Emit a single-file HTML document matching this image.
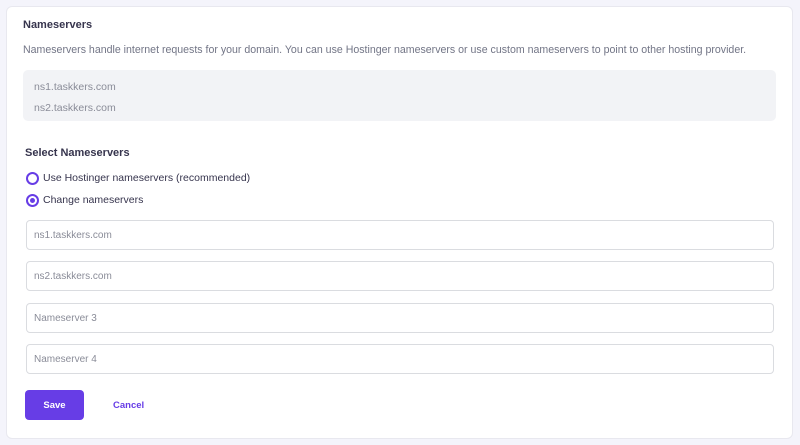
<!DOCTYPE html>
<html><head><style>
*{box-sizing:border-box;margin:0;padding:0}
body{width:800px;height:445px;background:#f4f4fb;font-family:"Liberation Sans",sans-serif;position:relative;overflow:hidden}
.card{position:absolute;left:6px;top:6px;width:787px;height:433px;background:#fff;border-radius:6px;border:1px solid #e8e8ef}
.a{position:absolute;white-space:nowrap}
.t{font-size:11px;font-weight:bold;color:#36344d}
.d{font-size:10.6px;color:#727586}
.box{position:absolute;left:23px;top:70px;width:753px;height:51px;background:#f2f3f6;border-radius:5px}
.g{font-size:10.5px;color:#8a8c98}
.r{position:absolute;left:26px;width:13px;height:13px;border:2px solid #673de6;border-radius:50%}
.r i{position:absolute;left:2px;top:2px;width:5px;height:5px;border-radius:50%;background:#673de6}
.rl{font-size:10.5px;color:#36344d}
.in{position:absolute;left:26px;width:748px;height:30px;border:1px solid #dadce0;border-radius:4px;font-size:10px;color:#8a8c98;padding:9px 7px}
.save{position:absolute;left:25px;top:390px;width:59px;height:30px;background:#673de6;border-radius:4px;color:#fff;font-size:9.5px;font-weight:bold;text-align:center;line-height:31px}
</style></head><body>
<div class="card"></div>
<div class="a t" style="left:23px;top:19px">Nameservers</div>
<div class="a d" style="left:23px;top:44px">Nameservers handle internet requests for your domain. You can use Hostinger nameservers or use custom nameservers to point to other hosting provider.</div>
<div class="box"></div>
<div class="a g" style="left:34px;top:81px">ns1.taskkers.com</div>
<div class="a g" style="left:34px;top:102px">ns2.taskkers.com</div>
<div class="a t" style="left:25px;top:147px">Select Nameservers</div>
<div class="r" style="top:172px"></div>
<div class="a rl" style="left:43px;top:172px">Use Hostinger nameservers (recommended)</div>
<div class="r" style="top:194px"><i></i></div>
<div class="a rl" style="left:43px;top:194px">Change nameservers</div>
<div class="in" style="top:220px">ns1.taskkers.com</div>
<div class="in" style="top:261px">ns2.taskkers.com</div>
<div class="in" style="top:303px">Nameserver 3</div>
<div class="in" style="top:344px">Nameserver 4</div>
<div class="save">Save</div>
<div class="a" style="left:113px;top:400px;font-size:9.5px;font-weight:bold;color:#673de6">Cancel</div>
</body></html>
